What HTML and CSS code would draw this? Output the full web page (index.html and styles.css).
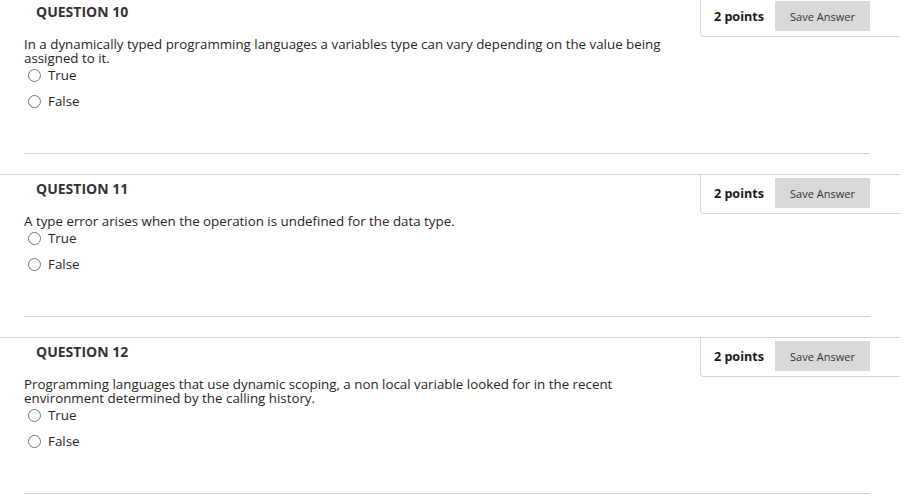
FILE: index.html
```html
<!DOCTYPE html>
<html lang="en">
<head>
<meta charset="utf-8">
<title>Quiz</title>
<link rel="stylesheet" href="styles.css">
</head>
<body>
<div class="page">
  <section class="question">
    <div class="q-header">
      <h3 class="q-title">QUESTION 10</h3>
      <div class="q-points">
        <span class="points">2 points</span>
        <button class="save">Save Answer</button>
      </div>
    </div>
    <div class="q-body">
      <p class="q-text">In a dynamically typed programming languages a variables type can vary depending on the value being assigned to it.</p>
      <label class="option"><input type="radio" name="q10"><span>True</span></label>
      <label class="option"><input type="radio" name="q10"><span>False</span></label>
    </div>
  </section>
  <section class="question">
    <div class="q-header">
      <h3 class="q-title">QUESTION 11</h3>
      <div class="q-points">
        <span class="points">2 points</span>
        <button class="save">Save Answer</button>
      </div>
    </div>
    <div class="q-body">
      <p class="q-text">A type error arises when the operation is undefined for the data type.</p>
      <label class="option"><input type="radio" name="q11"><span>True</span></label>
      <label class="option"><input type="radio" name="q11"><span>False</span></label>
    </div>
  </section>
  <section class="question">
    <div class="q-header">
      <h3 class="q-title">QUESTION 12</h3>
      <div class="q-points">
        <span class="points">2 points</span>
        <button class="save">Save Answer</button>
      </div>
    </div>
    <div class="q-body">
      <p class="q-text">Programming languages that use dynamic scoping, a non local variable looked for in the recent environment determined by the calling history.</p>
      <label class="option"><input type="radio" name="q12"><span>True</span></label>
      <label class="option"><input type="radio" name="q12"><span>False</span></label>
    </div>
  </section>
</div>
</body>
</html>
```

FILE: styles.css
```css
html, body {
  margin: 0;
  padding: 0;
  background: #ffffff;
}

body {
  font-family: "Open Sans", "DejaVu Sans", sans-serif;
  color: #333333;
  overflow: hidden;
}

.page {
  width: 900px;
  margin-top: -3px;
}

.question {
  border-top: 1px solid #d2d2d2;
}

.q-header {
  display: flex;
  justify-content: space-between;
  align-items: flex-start;
}

.q-title {
  margin: 0;
  padding: 6px 0 0 36px;
  font-size: 14px;
  line-height: 16px;
  font-weight: 700;
  color: #333333;
}

.q-points {
  display: flex;
  align-items: center;
  gap: 11px;
  padding: 3px 30px 5px 13px;
  border-left: 1px solid #d6d6d6;
  border-bottom: 1px solid #d6d6d6;
  border-bottom-left-radius: 4px;
}

.points {
  font-size: 12.6px;
  font-weight: 700;
  color: #1a1a1a;
}

.save {
  height: 30px;
  width: 95px;
  padding: 0;
  border: none;
  border-radius: 0;
  background: #d9d9d9;
  font-family: "Open Sans", "DejaVu Sans", sans-serif;
  font-size: 11px;
  color: #333333;
}

.q-body {
  margin: 0 30px 20px 24px;
  padding-bottom: 42px;
  border-bottom: 1px solid #d2d2d2;
}

.q-text {
  margin: 0;
  max-width: 650px;
  font-size: 13.33px;
  line-height: 14px;
  color: #262626;
}

.option {
  display: flex;
  align-items: center;
  height: 20px;
  margin-bottom: 6px;
  font-size: 13.33px;
  color: #262626;
}

.option:last-child {
  margin-bottom: 0;
}

.option input {
  width: 13px;
  height: 13px;
  margin: 0 7px 0 4px;
}
```
